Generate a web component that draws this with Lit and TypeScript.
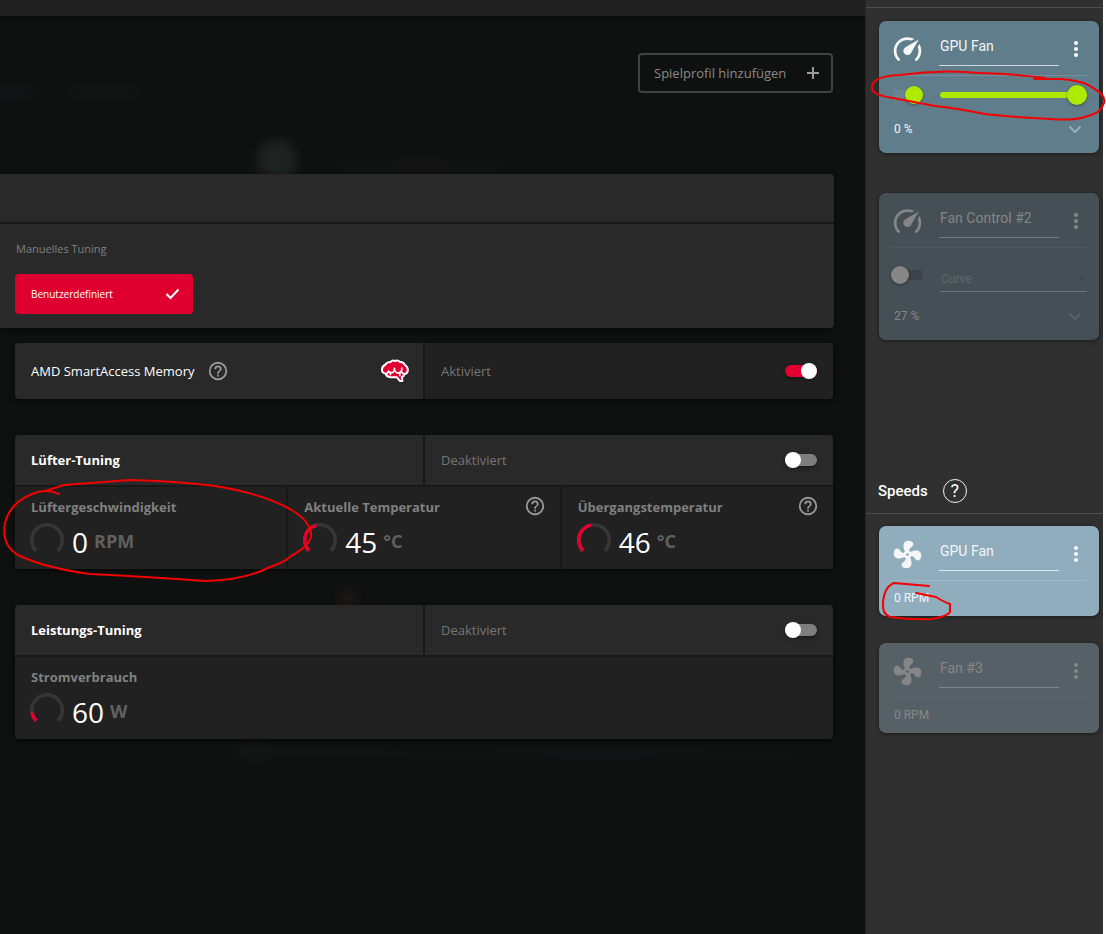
import { LitElement, html, css, svg, nothing } from "lit";
import { customElement, property } from "lit/decorators.js";
import { classMap } from "lit/directives/class-map.js";

const HELP =
  "M11,18H13V16H11V18M12,2A10,10 0 0,0 2,12A10,10 0 0,0 12,22A10,10 0 0,0 22,12A10,10 0 0,0 12,2M12,20C7.59,20 4,16.41 4,12C4,7.59 7.59,4 12,4C16.41,4 20,7.59 20,12C20,16.41 16.41,20 12,20M12,6A4,4 0 0,0 8,10H10A2,2 0 0,1 12,8A2,2 0 0,1 14,10C14,12 11,11.75 11,15H13C13,12.25 16,12 16,10A4,4 0 0,0 12,6Z";
const SPEEDOMETER =
  "M12,16A3,3 0 0,1 9,13C9,11.88 9.61,10.9 10.5,10.39L20.21,4.77L14.68,14.35C14.18,15.33 13.17,16 12,16M12,3C13.81,3 15.5,3.5 16.97,4.32L14.87,5.53C14,5.19 13,5 12,5A8,8 0 0,0 4,13C4,15.21 4.89,17.21 6.34,18.65H6.35C6.74,19.04 6.74,19.67 6.35,20.06C5.96,20.45 5.32,20.45 4.93,20.07V20.07C3.12,18.26 2,15.76 2,13A10,10 0 0,1 12,3M22,13C22,15.76 20.88,18.26 19.07,20.07V20.07C18.68,20.45 18.05,20.45 17.66,20.06C17.27,19.67 17.27,19.04 17.66,18.65V18.65C19.11,17.2 20,15.21 20,13C20,12 19.81,11 19.46,10.1L20.67,8C21.5,9.5 22,11.18 22,13Z";
const FAN =
  "M12,11A1,1 0 0,0 11,12A1,1 0 0,0 12,13A1,1 0 0,0 13,12A1,1 0 0,0 12,11M12.5,2C17,2 17.11,5.57 14.75,6.75C13.76,7.24 13.32,8.29 13.13,9.22C13.61,9.42 14.03,9.73 14.35,10.13C18.05,8.13 22.03,8.92 22.03,12.5C22.03,17 18.46,17.1 17.28,14.73C16.78,13.74 15.72,13.3 14.79,13.11C14.59,13.59 14.28,14 13.88,14.34C15.87,18.03 15.08,22 11.5,22C7,22 6.91,18.42 9.27,17.24C10.25,16.75 10.69,15.71 10.89,14.79C10.4,14.59 9.97,14.27 9.65,13.87C5.96,15.85 2,15.07 2,11.5C2,7 5.56,6.89 6.74,9.26C7.24,10.25 8.29,10.68 9.22,10.87C9.41,10.39 9.73,9.97 10.14,9.65C8.15,5.96 8.94,2 12.5,2Z";

const reset = css`
  * {
    box-sizing: border-box;
  }
  button {
    background: none;
    border: 0;
    padding: 0;
    margin: 0;
    color: inherit;
    font: inherit;
    cursor: pointer;
  }
  svg {
    display: block;
  }
`;

/** Metric tile: label, 270 degree arc and a large reading. */
@customElement("metric-tile")
class MetricTile extends LitElement {
  @property() label = "";
  @property() value = "";
  @property() unit = "";
  @property({ type: Number }) level = 0;
  @property({ type: Boolean }) help = false;

  static styles = [
    reset,
    css`
      :host {
        display: block;
        background: #212121;
        padding: 8px 12px 12px 15px;
      }
      .head {
        display: flex;
        justify-content: space-between;
        height: 24px;
      }
      .label {
        font-size: 13px;
        line-height: 24px;
        font-weight: 700;
        color: #808080;
        padding-left: 1px;
      }
      .help {
        width: 24px;
        height: 20px;
        color: #9a9a9a;
      }
      .reading {
        display: flex;
        align-items: center;
        height: 38px;
      }
      .gauge {
        margin-top: 4px;
      }
      .value {
        font-size: 28px;
        line-height: 38px;
        color: #fff;
        margin: 8px 0 0 8px;
      }
      .unit {
        font-size: 18px;
        line-height: 24px;
        font-weight: 700;
        color: #606060;
        margin: 6px 0 0 6px;
      }
    `,
  ];

  render() {
    const arc = "M6.2 27.8A15.25 15.25 0 1 1 27.8 27.8";
    return html`
      <div class="head">
        <span class="label">${this.label}</span>
        ${this.help
          ? html`<button class="help" aria-label="Hilfe">
              <svg width="22" height="22" viewBox="0 0 24 24"><path fill="currentColor" d=${HELP} /></svg>
            </button>`
          : nothing}
      </div>
      <div class="reading">
        <svg class="gauge" width="34" height="34" viewBox="0 0 34 34" fill="none" stroke-width="3.6">
          <path d=${arc} stroke="#363636" />
          ${this.level > 0
            ? svg`<path d=${arc} stroke="#e0032f" pathLength="100" stroke-dasharray="${this.level} 100" />`
            : nothing}
        </svg>
        <span class="value">${this.value}</span>
        <span class="unit">${this.unit}</span>
      </div>
    `;
  }
}

/** Sidebar card for a fan controller or a speed sensor. */
@customElement("fan-card")
class FanCard extends LitElement {
  @property() name = "";
  @property() reading = "";
  @property() kind: "control" | "speed" = "control";
  @property({ type: Boolean }) on = false;
  @property({ type: Boolean }) dim = false;

  static styles = [
    reset,
    css`
      :host {
        display: block;
        font-family: Roboto, "Liberation Sans", sans-serif;
      }
      .card {
        border-radius: 7px;
        padding: 0 12px;
        color: #f4f6f7;
        background: #607d8b;
        box-shadow: 0 1px 4px rgba(0, 0, 0, 0.45);
        --line: rgba(255, 255, 255, 0.14);
        --under: rgba(255, 255, 255, 0.7);
      }
      .card.speed {
        background: #90adbd;
      }
      .card.dim {
        background: #455056;
        color: #868686;
        --line: rgba(255, 255, 255, 0.06);
        --under: rgba(255, 255, 255, 0.24);
      }
      .card.speed.dim {
        background: #566167;
      }
      .top {
        display: flex;
        align-items: center;
        height: 55px;
        border-bottom: 1px solid var(--line);
      }
      .icon {
        flex: none;
        margin-top: 2px;
      }
      .name {
        flex: 1;
        width: 0;
        min-width: 0;
        height: 38px;
        margin: 7px 0 0 15px;
        padding: 0 1px 1px;
        border: 0;
        border-bottom: 1px solid var(--under);
        background: none;
        color: inherit;
        font: 14px/36px Roboto, sans-serif;
        outline: 0;
        align-self: flex-start;
      }
      .menu {
        flex: none;
        width: 28px;
        padding-left: 12px;
        margin-top: 2px;
      }
      .control {
        display: flex;
        height: 40px;
        align-items: center;
        padding-bottom: 2px;
      }
      .dim .control {
        height: 55px;
      }
      .switch {
        appearance: none;
        flex: none;
        width: 32px;
        height: 18px;
        margin: 0 17px 0 0;
        display: flex;
        align-items: center;
        border-radius: 9px;
        background: linear-gradient(#3a4449, #3a4449) right center / 20px 10px no-repeat;
      }
      .switch::before {
        content: "";
        width: 18px;
        height: 18px;
        border-radius: 50%;
        background: #868686;
        box-shadow: 0 1px 3px rgba(0, 0, 0, 0.4);
      }
      .switch:checked {
        justify-content: flex-end;
        background: linear-gradient(#6b8692, #6b8692) 3px center / 20px 10px no-repeat;
      }
      .switch:checked::before {
        background: #aeea00;
      }
      .slider {
        appearance: none;
        flex: 1;
        width: 0;
        min-width: 0;
        height: 20px;
        margin: 0;
        background: none;
      }
      .slider::-webkit-slider-runnable-track {
        height: 6px;
        border-radius: 3px;
        background: #aeea00;
      }
      .slider::-webkit-slider-thumb {
        appearance: none;
        width: 20px;
        height: 20px;
        margin-top: -7px;
        border-radius: 50%;
        background: #aeea00;
        box-shadow: 0 1px 3px rgba(0, 0, 0, 0.4);
      }
      .curve {
        appearance: none;
        flex: 1;
        width: 0;
        min-width: 0;
        height: 24px;
        margin-top: 10px;
        border: 0;
        border-bottom: 1px solid #6d7579;
        border-radius: 0;
        padding: 0 1px;
        opacity: 1;
        color: #60686c;
        font: 12px/22px Roboto, sans-serif;
        background: linear-gradient(to bottom left, #3f474b 50%, transparent 50%) right 4px center / 4px 4px no-repeat,
          linear-gradient(to bottom right, #3f474b 50%, transparent 50%) right 0 center / 4px 4px no-repeat;
      }
      .foot {
        display: flex;
        justify-content: space-between;
        align-items: center;
        height: 35px;
        padding: 0 5px 2px 3px;
        font-size: 12px;
        line-height: 24px;
      }
      .foot.full {
        height: 37px;
        padding-top: 1px;
        padding-bottom: 0;
        align-items: flex-start;
      }
      .chevron {
        opacity: 0.4;
      }
      .dim .chevron {
        opacity: 0.3;
      }
    `,
  ];

  private renderControl() {
    return html`<div class="control">
      <input class="switch" type="checkbox" aria-label="${this.name} on" .checked=${this.on} />
      ${this.on
        ? html`<input class="slider" type="range" min="0" max="100" value="100" aria-label="${this.name} speed" />`
        : html`<select class="curve" disabled aria-label="${this.name} curve"><option>Curve</option></select>`}
    </div>`;
  }

  render() {
    const control = this.kind === "control";
    return html`
      <section class=${classMap({ card: true, speed: !control, dim: this.dim })}>
        <div class="top">
          <svg class="icon" width="33" height="33" viewBox="0 0 24 24">
            <path fill="currentColor" d=${control ? SPEEDOMETER : FAN} />
          </svg>
          <input class="name" type="text" aria-label="Name" .value=${this.name} />
          <button class="menu" aria-label="Menu">
            <svg width="10" height="18" viewBox="0 0 10 18" fill="currentColor">
              <circle cx="5" cy="3" r="2.1" />
              <circle cx="5" cy="9" r="2.1" />
              <circle cx="5" cy="15" r="2.1" />
            </svg>
          </button>
        </div>
        ${control ? this.renderControl() : nothing}
        <div class=${classMap({ foot: true, full: control })}>
          <span>${this.reading}</span>
          ${control
            ? html`<button class="chevron" aria-label="Expand">
                <svg width="14" height="24" viewBox="0 0 14 24" fill="none" stroke="currentColor" stroke-width="2">
                  <path d="M1.5 9.5L7 15L12.5 9.5" />
                </svg>
              </button>`
            : nothing}
        </div>
      </section>
    `;
  }
}

@customElement("app-root")
class AppRoot extends LitElement {
  static styles = [
    reset,
    css`
      :host {
        display: block;
        position: relative;
        background: #fff;
        font-family: "Open Sans", "Noto Sans", sans-serif;
        font-size: 13px;
        line-height: 20px;
        color: #fff;
      }
      .page {
        display: flex;
        min-height: 100vh;
        padding-right: 3px;
      }
      .main {
        flex: 1;
        min-width: 0;
        background:
          radial-gradient(circle at 277px 160px, #202423 0, #1d2120 12px, transparent 27px),
          radial-gradient(ellipse 40px 14px at 10px 92px, #131416, transparent),
          radial-gradient(ellipse 44px 14px at 104px 92px, #141515, transparent),
          radial-gradient(ellipse 100px 12px at 420px 166px, #131313, transparent),
          radial-gradient(circle at 348px 600px, #1f1517, transparent 16px),
          radial-gradient(ellipse 30px 14px at 254px 752px, #141516, transparent),
          radial-gradient(ellipse 90px 10px at 330px 752px, #131314, transparent),
          radial-gradient(ellipse 260px 12px at 600px 754px, #121314, transparent),
          #0f1110;
      }
      .strip {
        height: 16px;
        background: #212121;
        box-shadow: 0 1px 5px #070707;
      }
      .actions {
        display: flex;
        justify-content: flex-end;
        padding: 37px 32px 0 0;
      }
      .add {
        display: flex;
        align-items: center;
        justify-content: space-between;
        width: 195px;
        height: 40px;
        padding: 0 12px 0 14px;
        border: 2px solid #424242;
        border-radius: 4px;
        color: #8a8a8a;
      }
      .panel {
        border-radius: 4px;
        box-shadow: 0 2px 5px rgba(0, 0, 0, 0.6);
        overflow: hidden;
        background: #181818;
        display: grid;
        gap: 2px;
      }
      .profile {
        margin: 81px 31px 0 0;
        border-radius: 0 4px 4px 0;
      }
      .blank {
        height: 48px;
        background: #292929;
      }
      .presets {
        background: #292929;
        padding: 15px 15px 14px;
      }
      .caption {
        margin: 0 0 15px;
        padding-left: 1px;
        font-size: 11px;
        color: #808080;
      }
      .preset {
        display: flex;
        align-items: center;
        justify-content: space-between;
        width: 178px;
        height: 40px;
        padding: 0 13px 0 16px;
        border-radius: 4px;
        background: #e0002f;
        font-size: 10px;
      }
      .stack {
        display: grid;
        gap: 36px;
        padding: 15px 32px 24px 15px;
      }
      .halves {
        display: grid;
        grid-template-columns: 1fr 1fr;
        gap: 2px;
      }
      .thirds {
        display: grid;
        grid-template-columns: 1fr 1fr 1fr;
        gap: 2px;
      }
      .cell {
        display: flex;
        align-items: center;
        height: 50px;
        padding: 0 16px;
        background: #292929;
      }
      .tall {
        height: 56px;
      }
      .dark {
        background: #212121;
      }
      .title {
        font-weight: 700;
      }
      .state {
        color: #757575;
        flex: 1;
      }
      .help {
        margin-left: 13px;
        color: #9a9a9a;
      }
      .brain {
        margin-left: auto;
        margin-right: -2px;
      }
      .track {
        display: flex;
        align-items: center;
        height: 12px;
        border-radius: 6px;
        background: #7e7e7e;
        box-shadow: 0 2px 4px rgba(0, 0, 0, 0.4);
      }
      .track.on {
        background: #e0002f;
      }
      .toggle {
        appearance: none;
        display: flex;
        align-items: center;
        width: 32px;
        height: 16px;
        margin: 0;
        background: none;
      }
      .toggle::before {
        content: "";
        width: 16px;
        height: 16px;
        border-radius: 50%;
        background: #fff;
      }
      .toggle:checked {
        justify-content: flex-end;
      }
      .side {
        flex: none;
        width: 238px;
        background: #303030;
        border-left: 1px solid #262626;
        font-family: Roboto, "Liberation Sans", sans-serif;
      }
      .rule {
        height: 8px;
        border-bottom: 1px solid #4c4c4c;
      }
      .cards {
        display: grid;
        grid-template-columns: minmax(0, 1fr);
        gap: 40px;
        padding: 13px 4px 0 13px;
      }
      .sensors {
        gap: 27px;
        padding-top: 12px;
      }
      .speeds {
        display: flex;
        align-items: center;
        gap: 15px;
        height: 47px;
        margin-top: 127px;
        padding: 2px 12px 0;
        border-bottom: 1px solid #4c4c4c;
      }
      .speeds h2 {
        margin: 0;
        font-size: 15px;
        line-height: 20px;
        font-weight: 500;
      }
      .ring {
        width: 24px;
        height: 24px;
        border: 1px solid #f0f0f0;
        border-radius: 50%;
        font-size: 18px;
        line-height: 22px;
        text-align: center;
        outline: 0;
      }
      .ink {
        position: absolute;
        left: 0;
        top: 0;
        pointer-events: none;
      }
    `,
  ];

  private toggle(label: string, on = false) {
    return html`<span class=${classMap({ track: true, on })}>
      <input class="toggle" type="checkbox" aria-label=${label} .checked=${on} />
    </span>`;
  }

  render() {
    return html`
      <div class="page">
        <main class="main">
          <div class="strip"></div>
          <div class="actions">
            <button class="add">
              <span>Spielprofil hinzufügen</span>
              <svg width="12" height="12" viewBox="0 0 12 12" stroke="#9a9a9a" stroke-width="2"><path d="M6 0V12M0 6H12" /></svg>
            </button>
          </div>
          <section class="panel profile">
            <div class="blank"></div>
            <div class="presets">
              <p class="caption">Manuelles Tuning</p>
              <button class="preset">
                <span>Benutzerdefiniert</span>
                <svg width="15" height="12" viewBox="0 0 15 12" fill="none" stroke="#fff" stroke-width="2"><path d="M1.5 6L5.5 10L13.5 1.5" /></svg>
              </button>
            </div>
          </section>
          <div class="stack">
            <section class="panel">
              <div class="halves">
                <div class="cell tall">
                  <span>AMD SmartAccess Memory</span>
                  <button class="help" aria-label="Hilfe">
                    <svg width="22" height="22" viewBox="0 0 24 24"><path fill="currentColor" d=${HELP} /></svg>
                  </button>
                  <svg class="brain" width="28" height="24" viewBox="0 0 28 24" stroke-linejoin="round" stroke-linecap="round">
                    <path
                      fill="#e0002f"
                      stroke="#fff"
                      stroke-width="2"
                      d="M9.5 3Q11.5 0.8 14 2Q17 0.6 19 3Q22.5 2.8 24 6Q27 8 26.8 11Q26.8 14.6 23.4 15.2Q23 17.4 20.8 18L21.4 22H18.8L15.8 18.2H9.2Q5.4 18 4.8 14.8Q1 14 1 11Q0.8 7.4 4 6Q5.6 3 9.5 3Z"
                    />
                    <path fill="none" stroke="#fff" stroke-width="1.7" d="M4.8 14.6Q7 14.8 7.5 12.2Q9 14.6 12 13.2Q13.6 12.2 13.4 9.4Q13.4 12.4 15.4 13.4Q18 14.6 20 12.6Q21 11.4 20.8 9.2M20.4 12.6Q21.4 14.8 23.4 15M18.8 14V16.4M9.4 14.6V15.6" />
                  </svg>
                </div>
                <div class="cell tall dark">
                  <span class="state">Aktiviert</span>${this.toggle("AMD SmartAccess Memory", true)}
                </div>
              </div>
            </section>
            <section class="panel">
              <div class="halves">
                <div class="cell title">Lüfter-Tuning</div>
                <div class="cell"><span class="state">Deaktiviert</span>${this.toggle("Lüfter-Tuning")}</div>
              </div>
              <div class="thirds">
                <metric-tile label="Lüftergeschwindigkeit" value="0" unit="RPM"></metric-tile>
                <metric-tile label="Aktuelle Temperatur" value="45" unit="°C" level="45" help></metric-tile>
                <metric-tile label="Übergangstemperatur" value="46" unit="°C" level="46" help></metric-tile>
              </div>
            </section>
            <section class="panel">
              <div class="halves">
                <div class="cell title">Leistungs-Tuning</div>
                <div class="cell"><span class="state">Deaktiviert</span>${this.toggle("Leistungs-Tuning")}</div>
              </div>
              <metric-tile label="Stromverbrauch" value="60" unit="W" level="13"></metric-tile>
            </section>
          </div>
        </main>
        <aside class="side">
          <div class="rule"></div>
          <div class="cards">
            <fan-card name="GPU Fan" reading="0 %" on></fan-card>
            <fan-card name="Fan Control #2" reading="27 %" dim></fan-card>
          </div>
          <header class="speeds">
            <h2>Speeds</h2>
            <button class="ring" aria-label="Help">?</button>
          </header>
          <div class="cards sensors">
            <fan-card kind="speed" name="GPU Fan" reading="0 RPM"></fan-card>
            <fan-card kind="speed" name="Fan #3" reading="0 RPM" dim></fan-card>
          </div>
        </aside>
      </div>
      <svg class="ink" width="1106" height="934" viewBox="0 0 1106 934" fill="none" stroke="#f40000" stroke-width="2" stroke-linecap="round" stroke-linejoin="round" aria-hidden="true">
        <path d="M1034 79L1060 79Q1085 81 1093 88Q1106 95 1104 103Q1101 113 1088 116Q1075 121 1050 119Q1010 117 985 114Q955 108 935 106L893 98Q870 95 872 86Q874 76 900 75Q940 69 980 73Q1015 74 1045 78" />
        <path d="M59 494Q46 488 32 494Q10 503 5 523Q1 545 18 555Q45 568 90 574Q150 577 205 581Q245 580 270 567Q285 562 291 556Q312 545 311 533Q309 520 290 509Q260 493 215 486Q175 481 130 480L64 485L45 491" />
        <path d="M929 586L894 583Q884 587 883 603Q882 614 890 617Q912 620 932 619Q948 616 950 612L950 604Q944 602 936 597L916 593" />
      </svg>
    `;
  }
}
